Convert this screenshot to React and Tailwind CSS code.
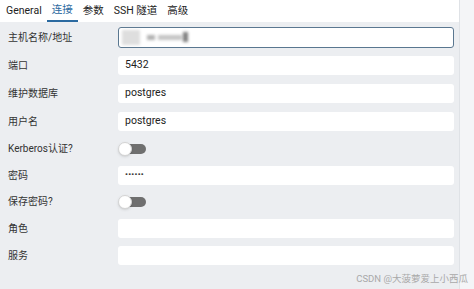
import React from "react";

const tabs = ["General", "连接", "参数", "SSH 隧道", "高级"];

const Toggle = () => (
  <div className="relative w-[28px] h-[14px] flex items-center">
    <div className="ml-[3px] w-[25px] h-[10px] rounded-full bg-[#6f6f6f]" />
    <div className="absolute left-0 top-0 w-[14px] h-[14px] rounded-full bg-white border border-[#d4d4d4] shadow-sm" />
  </div>
);

const Input = ({ value, focused, children }) => (
  <div
    className={
      "flex-1 flex items-center bg-white rounded-[3px] px-[7px] text-[10.5px] text-[#222] " +
      (focused
        ? "h-[21px] border border-[#5a7790]"
        : "h-[19px]")
    }
  >
    {children || value}
  </div>
);

const Row = ({ label, h, children }) => (
  <div className="flex items-center" style={{ height: h }}>
    <div className="w-[118px] pl-[8px] text-[10px] text-[#333]">{label}</div>
    <div className="flex-1 flex items-center pr-[5px]">{children}</div>
  </div>
);

export default function App() {
  return (
    <div
      className="relative w-[474px] h-[289px] flex bg-[#f4f5f7] overflow-hidden"
      style={{ fontFamily: "Roboto, 'Noto Sans CJK SC', sans-serif" }}
    >
      <div className="w-[460px] flex flex-col border-r border-[#dfe2e6]">
        <div className="h-[22px] bg-white flex items-end pl-[1px] text-[10.5px] text-[#222]">
          {tabs.map((t, i) => (
            <div
              key={t}
              className={
                "h-[22px] flex items-center px-[5px] " +
                (i === 1 ? "text-[#2b6aa0] border-b-2 border-[#2b6aa0]" : "")
              }
            >
              {t}
            </div>
          ))}
        </div>
        <div className="flex-1 bg-[#eceef1] pt-[1px]">
          <Row label="主机名称/地址" h={28}>
            <Input focused>
              <span className="blur-[1.5px] select-none flex items-center -ml-[4px]">
                <span className="inline-block w-[18px] h-[15px] bg-[#dedede]" />
                <span className="inline-block ml-[7px] w-[8px] h-[5px] bg-[#b0b0b0]" />
                <span className="inline-block ml-[3px] w-[24px] h-[5px] bg-[#c4c4c4]" />
                <span className="inline-block ml-[1px] w-[5px] h-[10px] bg-[#7f7f7f]" />
              </span>
            </Input>
          </Row>
          <Row label="端口" h={28}>
            <Input value="5432" />
          </Row>
          <Row label="维护数据库" h={28}>
            <Input value="postgres" />
          </Row>
          <Row label="用户名" h={28}>
            <Input value="postgres" />
          </Row>
          <Row label="Kerberos认证?" h={27}>
            <Toggle />
          </Row>
          <Row label="密码" h={26}>
            <Input>
              <span className="text-[8px] font-bold tracking-[0.3px] text-[#333]">••••••</span>
            </Input>
          </Row>
          <Row label="保存密码?" h={27}>
            <Toggle />
          </Row>
          <Row label="角色" h={26}>
            <Input />
          </Row>
          <Row label="服务" h={29}>
            <Input />
          </Row>
        </div>
      </div>
      <div className="absolute right-[6px] bottom-[3px] text-[9.5px] text-[#a9a9a9]">
        CSDN @大菠萝爱上小西瓜
      </div>
    </div>
  );
}
